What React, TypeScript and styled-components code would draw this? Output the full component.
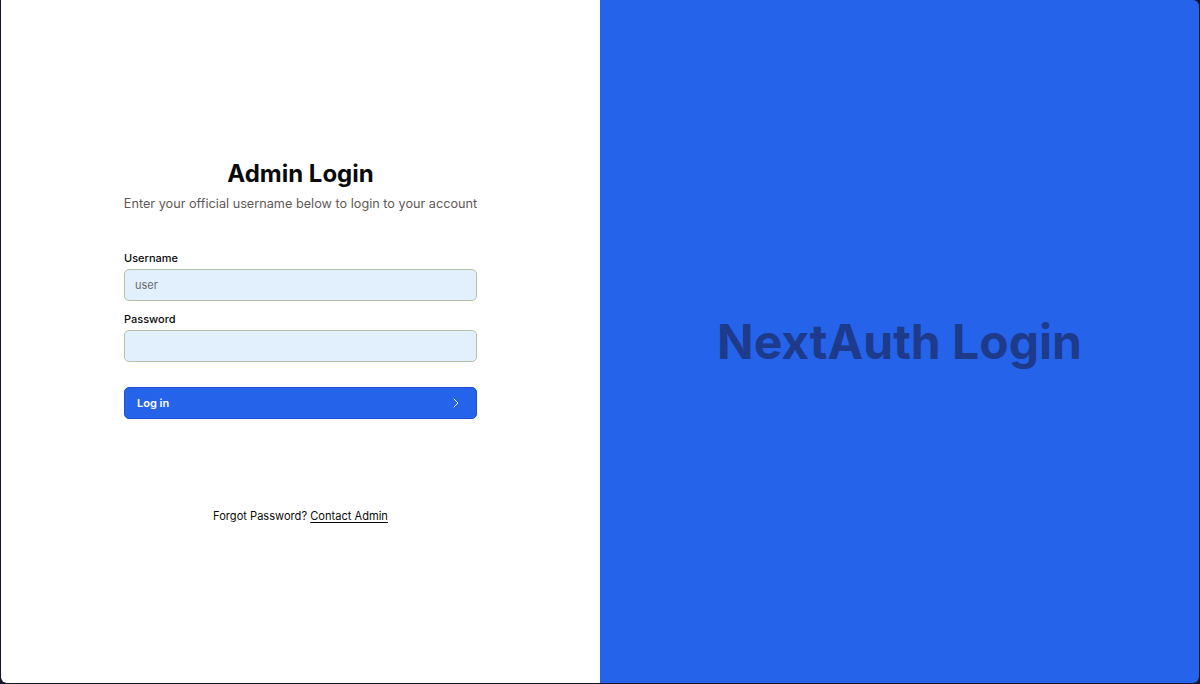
import React from "react";
import styled, { createGlobalStyle } from "styled-components";
import { ChevronRight } from "lucide-react";

const GlobalStyle = createGlobalStyle`
  html, body {
    margin: 0;
    padding: 0;
    background: #15152a;
  }
  body {
    font-family: Inter, "Noto Sans", sans-serif;
  }
  * {
    box-sizing: border-box;
  }
`;

const App = () => {
  return (
    <>
      <GlobalStyle />
      <Frame>
        <Window>
          <LeftPanel>
            <Form>
              <Header>
                <Title>Admin Login</Title>
                <Subtitle>Enter your official username below to login to your account</Subtitle>
              </Header>
              <Fields>
                <Field>
                  <Label>Username</Label>
                  <Input placeholder="user" />
                </Field>
                <Field>
                  <Label>Password</Label>
                  <Input type="password" />
                </Field>
              </Fields>
              <Button>
                Log in
                <Chevron />
              </Button>
              <Footer>
                Forgot Password? <FooterLink href="#">Contact Admin</FooterLink>
              </Footer>
            </Form>
          </LeftPanel>
          <RightPanel>
            <Brand>NextAuth Login</Brand>
          </RightPanel>
        </Window>
      </Frame>
    </>
  );
};

const Frame = styled.div`
  width: 1200px;
  height: 684px;
  padding: 0 1px 1px 1px;
`;

const Window = styled.div`
  display: flex;
  height: 100%;
  border-radius: 0 6px 6px 6px;
  overflow: hidden;
`;

const LeftPanel = styled.div`
  flex: 0 0 599px;
  background: #ffffff;
  display: flex;
  align-items: center;
  justify-content: center;
  padding-bottom: 2px;
`;

const Form = styled.div`
  width: 353px;
  display: flex;
  flex-direction: column;
`;

const Header = styled.div`
  display: flex;
  flex-direction: column;
  align-items: center;
  gap: 4px;
`;

const Title = styled.h1`
  margin: 0;
  font-size: 24px;
  line-height: 32px;
  font-weight: 700;
  color: #0a0a0a;
`;

const Subtitle = styled.p`
  margin: 0;
  font-size: 12.7px;
  line-height: 20px;
  color: #5f5a57;
  white-space: nowrap;
`;

const Fields = styled.div`
  display: flex;
  flex-direction: column;
  gap: 10px;
  margin-top: 36px;
`;

const Field = styled.div`
  display: flex;
  flex-direction: column;
  gap: 3px;
`;

const Label = styled.label`
  font-size: 11px;
  line-height: 16px;
  font-weight: 500;
  color: #0a0a0a;
`;

const Input = styled.input`
  height: 32px;
  width: 100%;
  padding: 0 10px;
  border: 1px solid #b8c0a8;
  border-radius: 5px;
  background: #e1f0fc;
  font-family: inherit;
  font-size: 11px;
  color: #222;
  outline: none;

  &::placeholder {
    color: #6b6b6b;
  }
`;

const Button = styled.button`
  margin-top: 25px;
  height: 32px;
  width: 100%;
  display: flex;
  align-items: center;
  justify-content: space-between;
  padding: 0 12px 0 12px;
  border: 1px solid #1d4fd0;
  border-radius: 5px;
  background: #2563eb;
  color: #ffffff;
  font-family: inherit;
  font-size: 11px;
  font-weight: 600;
  cursor: pointer;
`;

const Chevron = styled(ChevronRight)`
  width: 16px;
  height: 16px;
  stroke-width: 1.5;
`;

const Footer = styled.p`
  margin: 89px 0 0 0;
  text-align: center;
  font-size: 11.1px;
  line-height: 16px;
  color: #0a0a0a;
`;

const FooterLink = styled.a`
  color: #0a0a0a;
  text-decoration: underline;
  text-underline-offset: 2px;
`;

const RightPanel = styled.div`
  flex: 1;
  background: #2563eb;
  display: flex;
  align-items: center;
  justify-content: center;
`;

const Brand = styled.h2`
  margin: 0;
  font-size: 48px;
  line-height: 1;
  font-weight: 700;
  color: #1e3a8a;
`;

export default App;
